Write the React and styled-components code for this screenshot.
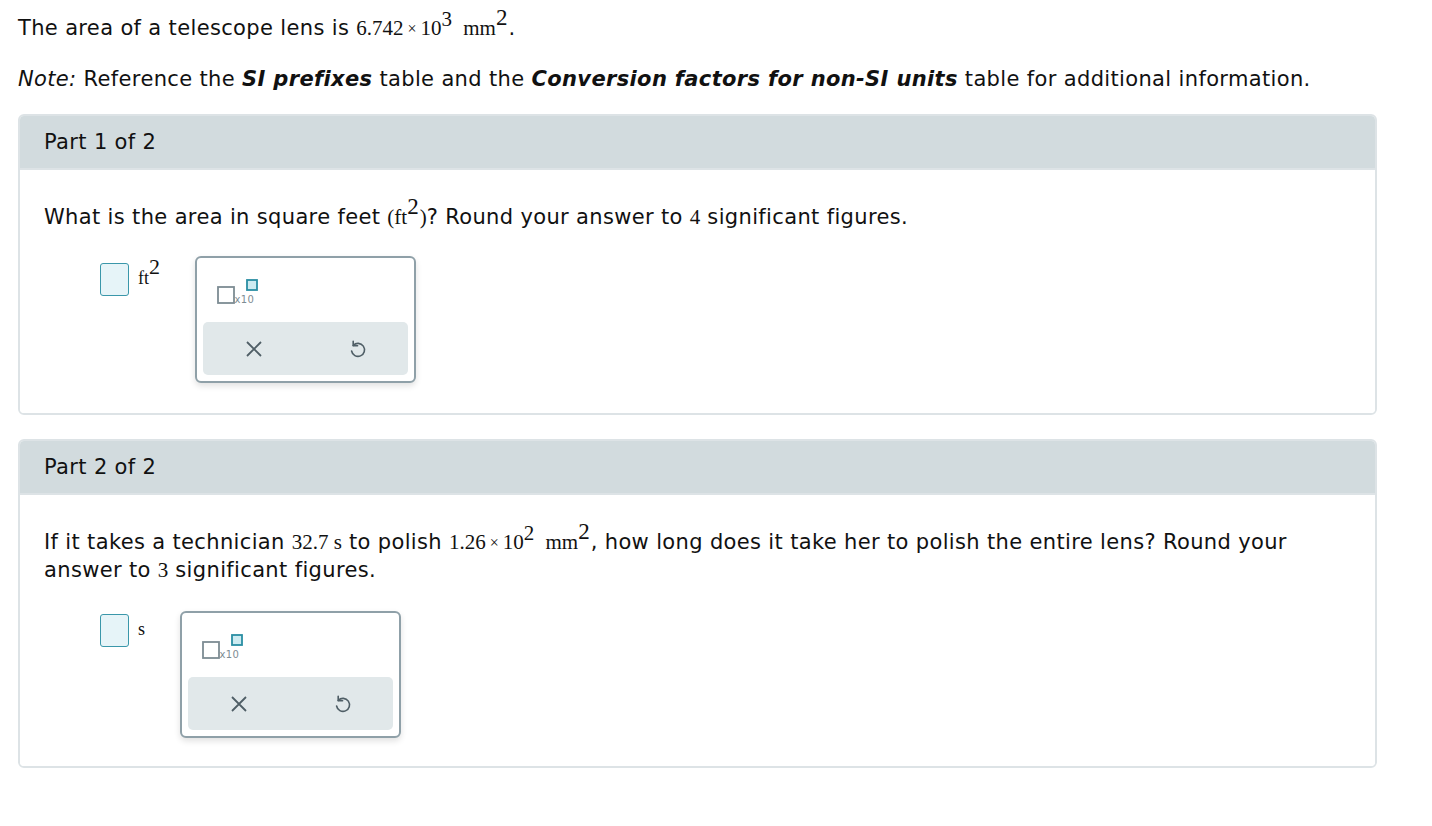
import styled, { createGlobalStyle } from "styled-components";

const Global = createGlobalStyle`
  body {
    margin: 0;
    background: #fff;
    font-family: "DejaVu Sans", Verdana, sans-serif;
    color: #111;
  }
`;

function Sci() {
  return (
    <svg width="46" height="26" viewBox="0 0 46 26">
      <rect x="1" y="8" width="16" height="16" fill="none" stroke="#7d8c93" strokeWidth="1.8" />
      <text x="17.5" y="24" fontSize="10" fontFamily="DejaVu Sans, sans-serif" fill="#7d8c93">x10</text>
      <rect x="30" y="1" width="10" height="10" fill="#cdebf1" stroke="#2a8ea3" strokeWidth="1.8" />
    </svg>
  );
}

function CloseIcon() {
  return (
    <svg width="20" height="20" viewBox="0 0 20 20">
      <path d="M3 3 L17 17 M17 3 L3 17" stroke="#4f5e66" strokeWidth="1.8" fill="none" />
    </svg>
  );
}

function UndoIcon() {
  return (
    <svg width="20" height="20" viewBox="0 0 20 20">
      <path d="M6.2 6.5 A6.5 6.5 0 1 1 4.6 12" stroke="#4f5e66" strokeWidth="1.6" fill="none" strokeLinecap="round" />
      <path d="M6.2 2.2 L6.2 6.8 L10.6 6.8" stroke="#4f5e66" strokeWidth="1.6" fill="none" strokeLinecap="round" strokeLinejoin="round" />
    </svg>
  );
}

function AnswerRow({ unit, sup, top, boxTop }) {
  return (
    <Row $top={top}>
      <InputBox $top={boxTop} />
      <Unit $top={boxTop + 5}>
        {unit}
        {sup && <USup>{sup}</USup>}
      </Unit>
      <Widget>
        <WidgetTop>
          <Sci />
        </WidgetTop>
        <ButtonBar>
          <IconButton>
            <CloseIcon />
          </IconButton>
          <IconButton>
            <UndoIcon />
          </IconButton>
        </ButtonBar>
      </Widget>
    </Row>
  );
}

export default function App() {
  return (
    <Page>
      <Global />
      <Intro>
        The area of a telescope lens is{" "}
        <M>
          6.742<Times>×</Times>10<Sup>3</Sup> mm<Sup $big>2</Sup>
        </M>
        .
      </Intro>
      <Note>
        <i>Note:</i> Reference the <b><i>SI prefixes</i></b> table and the{" "}
        <b><i>Conversion factors for non-SI units</i></b> table for additional information.
      </Note>

      <Panel $mt={21}>
        <Header>Part 1 of 2</Header>
        <Body $bottom={30}>
          <Question>
            What is the area in square feet{" "}
            <M>
              (ft<Sup $big>2</Sup>)
            </M>
            ? Round your answer to <M>4</M> significant figures.
          </Question>
          <AnswerRow unit="ft" sup="2" top={25} boxTop={7} />
        </Body>
      </Panel>

      <Panel $mt={24}>
        <Header>Part 2 of 2</Header>
        <Body $bottom={28}>
          <Question>
            If it takes a technician <M>32.7 s</M> to polish{" "}
            <M>
              1.26<Times>×</Times>10<Sup>2</Sup> mm<Sup $big>2</Sup>
            </M>
            , how long does it take her to polish the entire lens? Round your answer to{" "}
            <M>3</M> significant figures.
          </Question>
          <AnswerRow unit="s" top={27} boxTop={3} />
        </Body>
      </Panel>
    </Page>
  );
}

const Page = styled.div`
  width: 1360px;
  padding: 14px 0 40px 18px;
  font-size: 21px;
  letter-spacing: 0.35px;
`;

const Intro = styled.p`
  margin: 0;
  line-height: 28px;
`;

const Note = styled.p`
  margin: 23px 0 0;
  line-height: 28px;
`;

const M = styled.span`
  font-family: "Liberation Serif", "Times New Roman", serif;
  font-size: 21px;
  line-height: 1;
  letter-spacing: 0;
  white-space: nowrap;
`;

const Times = styled.span`
  font-size: 16px;
  margin: 0 4px;
  position: relative;
  top: -1px;
`;

const Sup = styled.span`
  font-size: ${(p) => (p.$big ? "23px" : "21px")};
  line-height: 0;
  vertical-align: baseline;
  position: relative;
  top: ${(p) => (p.$big ? "-10px" : "-9px")};
  margin-right: ${(p) => (p.$big ? "1px" : "6px")};
`;

const Panel = styled.section`
  margin-top: ${(p) => p.$mt}px;
  width: 1359px;
  box-sizing: border-box;
  border: 2px solid #dde3e6;
  border-radius: 6px;
  overflow: hidden;
`;

const Header = styled.div`
  background: #d2dbde;
  height: 52px;
  display: flex;
  align-items: center;
  padding-left: 24px;
  border-bottom: 2px solid #dde3e6;
`;

const Body = styled.div`
  padding: 33px 24px ${(p) => p.$bottom}px;
  background: #fff;
`;

const Question = styled.p`
  margin: 0;
  line-height: 28px;
`;

const Row = styled.div`
  display: flex;
  align-items: flex-start;
  margin-top: ${(p) => p.$top}px;
  padding-left: 56px;
`;

const InputBox = styled.div`
  width: 27px;
  height: 31px;
  margin-top: ${(p) => p.$top}px;
  border: 1.5px solid #3a97aa;
  border-radius: 3px;
  background: #e6f4f8;
`;

const Unit = styled.span`
  font-family: "Liberation Serif", "Times New Roman", serif;
  font-size: 18px;
  letter-spacing: 0;
  margin-left: 9px;
  margin-top: ${(p) => p.$top}px;
  line-height: 20px;
`;

const USup = styled.span`
  font-size: 22px;
  line-height: 0;
  position: relative;
  top: -10px;
`;

const Widget = styled.div`
  margin-left: 35px;
  width: 221px;
  height: 127px;
  border: 2px solid #8fa0a8;
  border-radius: 6px;
  box-shadow: 0 3px 6px rgba(0, 0, 0, 0.12);
  padding: 0 6px 6px;
  box-sizing: border-box;
  display: flex;
  flex-direction: column;
  background: #fff;
`;

const WidgetTop = styled.div`
  flex: 1;
  display: flex;
  align-items: center;
  padding-left: 14px;
  padding-top: 4px;
`;

const ButtonBar = styled.div`
  height: 53px;
  background: #e1e8ea;
  border-radius: 5px;
  display: flex;
  align-items: center;
  justify-content: space-around;
`;

const IconButton = styled.button`
  background: none;
  border: none;
  padding: 0;
  width: 40px;
  height: 40px;
  display: flex;
  align-items: center;
  justify-content: center;
`;
